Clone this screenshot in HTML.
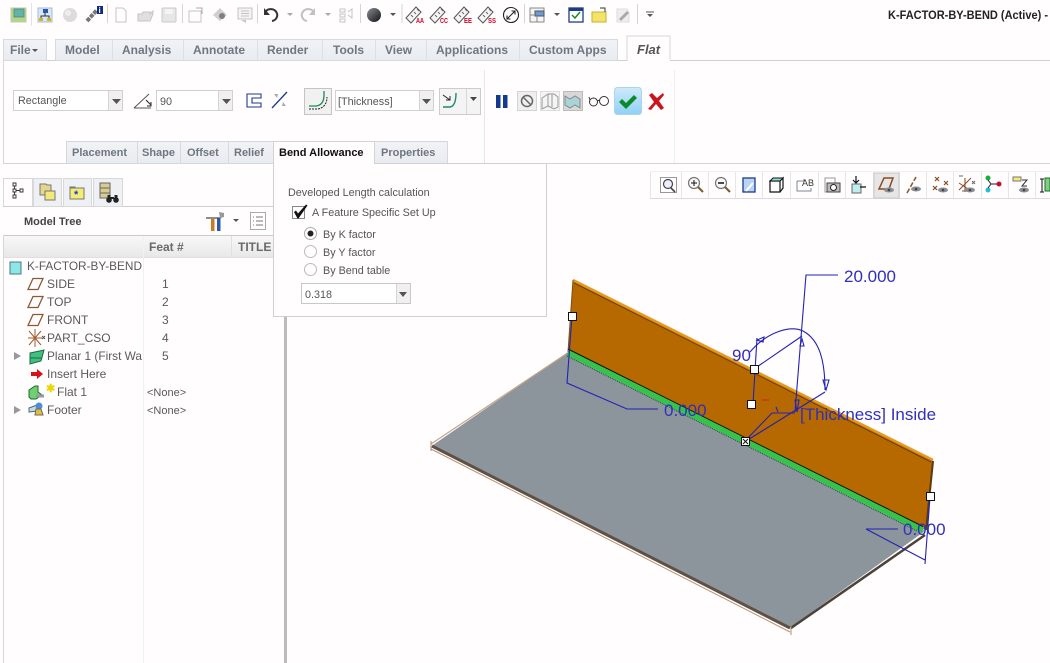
<!DOCTYPE html>
<html><head><meta charset="utf-8"><title>K-FACTOR-BY-BEND</title>
<style>
html,body{margin:0;padding:0;background:#fffdfe;width:1050px;height:663px;overflow:hidden}
svg{display:block;position:absolute;left:0;top:0}
text{font-family:"Liberation Sans",sans-serif;font-size:10.8px;fill:#4f4f4f}
.tab{font-weight:bold;font-size:12px;fill:#707680}
.sub{font-weight:bold;font-size:11px;fill:#707680}
.tree{font-size:12px;fill:#5a5a5a}
.dim{font-size:17px;fill:#3030bc}
.red{font-weight:bold;font-size:7px;fill:#d00020}
</style></head><body>
<svg width="1050" height="663" viewBox="0 0 1050 663" xmlns="http://www.w3.org/2000/svg">
<defs>
<linearGradient id="tb" x1="0" y1="0" x2="0" y2="1"><stop offset="0" stop-color="#f1f3f6"/><stop offset="1" stop-color="#e8ebf0"/></linearGradient>
<linearGradient id="hd" x1="0" y1="0" x2="0" y2="1"><stop offset="0" stop-color="#f8f8f8"/><stop offset="1" stop-color="#e8e8e8"/></linearGradient>
<linearGradient id="ok" x1="0" y1="0" x2="0" y2="1"><stop offset="0" stop-color="#cfeafb"/><stop offset="1" stop-color="#8fd0f6"/></linearGradient>
<linearGradient id="ball" x1="0" y1="0" x2="1" y2="1"><stop offset="0" stop-color="#8a8f96"/><stop offset="1" stop-color="#111"/></linearGradient>
<g id="ruler"><path d="M-8 4 L2 -7 L7 -2 L-3 9 Z" fill="#f6f6f6" stroke="#555" stroke-width="1"/><path d="M-3 1l2 2M0 -2l2 2M3 -5l2 2" stroke="#666" fill="none"/></g>
<g id="plane"><path d="M-7 5.500 H3 L8 -5.500 H-2 Z" fill="none" stroke="#8a5a30" stroke-width="1.300"/></g>
<g id="eye"><ellipse cx="0" cy="0" rx="5" ry="2.500" fill="#8b8f93"/><circle cx="0" cy="0" r="1.300" fill="#444"/></g>
<path id="drop" d="M-3 0H3L0 3Z" fill="#555"/>
<path id="drop2" d="M-3 0H3L0 3Z" fill="#aaa"/>
</defs>

<!-- top quick toolbar -->
<g>
<rect x="11" y="8" width="15" height="14" fill="#b4d488" stroke="#c0cca8"/><rect x="14" y="9" width="10" height="8" fill="#62b4a8" stroke="#4a8a80" stroke-width=".8"/>
<line x1="31.500" y1="3" x2="31.500" y2="26" stroke="#e2e2e2"/>
<rect x="38" y="8" width="14" height="14" fill="#d6e8f8" stroke="#a8bccc"/><rect x="43" y="9" width="5" height="4" fill="#2c55b0"/><path d="M45 13v3M41 19v-3h8v3" stroke="#333" fill="none"/><rect x="39" y="18" width="4" height="3" fill="#d8b030"/><rect x="47" y="18" width="4" height="3" fill="#d8b030"/>
<circle cx="70" cy="15" r="7" fill="#dcdcdc"/><circle cx="68" cy="13" r="3" fill="#eee"/>
<path d="M87 21 L97 10" stroke="#777" stroke-width="4" stroke-dasharray="4 1"/><rect x="97" y="6" width="6" height="8" fill="#102a80"/><text x="98.500" y="13" style="font-size:8px;font-weight:bold;fill:#fff">i</text>
<line x1="107.500" y1="4" x2="107.500" y2="23" stroke="#d4d4d4"/>
<path d="M116 8h7l3 3v11h-10z" fill="#fff" stroke="#c4c4c4"/>
<path d="M138 21v-7h4l1-2h7v2l3-3v3l-3 7z" fill="#e0e0e0" stroke="#c4c4c4"/>
<rect x="162" y="8" width="14" height="14" rx="1" fill="#e6e6e6" stroke="#cacaca"/><rect x="165" y="9" width="8" height="5" fill="#f4f4f4"/>
<line x1="182.500" y1="4" x2="182.500" y2="23" stroke="#d4d4d4"/>
<path d="M189 11h12v11h-12z" fill="none" stroke="#c4c4c4"/><path d="M196 8h6v6" fill="none" stroke="#aaa"/>
<path d="M213 15l7-7 7 7-7 6z" fill="#d0d0d0"/><circle cx="222" cy="16" r="3" fill="#808080"/>
<rect x="238" y="8" width="14" height="11" fill="#f4f4f4" stroke="#c4c4c4"/><path d="M241 11h8M241 13.500h8M241 16h8" stroke="#c4c4c4"/><path d="M241 20h5v3z" fill="#c4c4c4"/>
<line x1="257.500" y1="4" x2="257.500" y2="23" stroke="#d4d4d4"/>
<path d="M266 11 A6.500 6 0 1 1 272 21" fill="none" stroke="#333" stroke-width="2"/><path d="M264 8v7h6z" fill="#333"/>
<use href="#drop2" x="290" y="13"/>
<path d="M313 11 A6.500 6 0 1 0 307 21" fill="none" stroke="#c0c0c0" stroke-width="2"/><path d="M315 8v7h-6z" fill="#c0c0c0"/>
<use href="#drop2" x="328" y="13"/>
<path d="M340 9h5v3h-5zM340 14h5v3h-5zM340 19h5v3h-5zM348 12l4-3v9l-4-3" fill="none" stroke="#c4c4c4"/>
<line x1="360.500" y1="4" x2="360.500" y2="23" stroke="#d4d4d4"/>
<circle cx="374" cy="15" r="7" fill="url(#ball)"/>
<use href="#drop" x="393" y="13"/>
<line x1="402" y1="4" x2="402" y2="23" stroke="#d4d4d4"/>
<use href="#ruler" x="414" y="14"/><text x="416" y="23" class="red" textLength="8" lengthAdjust="spacingAndGlyphs">AA</text>
<use href="#ruler" x="438" y="14"/><text x="440" y="23" class="red" textLength="8" lengthAdjust="spacingAndGlyphs">CC</text>
<use href="#ruler" x="462" y="14"/><text x="464" y="23" class="red" textLength="8" lengthAdjust="spacingAndGlyphs">EE</text>
<use href="#ruler" x="486" y="14"/><text x="488" y="23" class="red" textLength="8" lengthAdjust="spacingAndGlyphs">SS</text>
<circle cx="511" cy="15" r="7.500" fill="#fff" stroke="#222" stroke-width="1.100"/><path d="M507 19L515 11M511.500 11H515V14.500M507 15.500V19H510.500" fill="none" stroke="#222" stroke-width="1.100"/>
<line x1="524.500" y1="4" x2="524.500" y2="23" stroke="#d4d4d4"/>
<rect x="530" y="8" width="14" height="14" fill="#f4f4f4" stroke="#888"/><rect x="535" y="11" width="9" height="5" fill="#6a9ad8" stroke="#555"/><path d="M530 15h5M537 16v6" stroke="#888"/>
<use href="#drop" x="557" y="13"/>
<rect x="569" y="8" width="14" height="14" fill="#fff" stroke="#1c3b8a" stroke-width="1.300"/><rect x="569" y="8" width="14" height="3" fill="#1c3b8a"/><path d="M572 15l3 3 5-6" fill="none" stroke="#1a8a30" stroke-width="1.500"/>
<path d="M592 12h14v10h-14z" fill="#f3e36a" stroke="#c8b030"/><path d="M600 8h5v4" fill="none" stroke="#333"/>
<path d="M617 9h10l2 3v10h-12z" fill="#eee" stroke="#ddd"/><path d="M620 20l8-8" stroke="#aaa" stroke-width="3"/>
<line x1="637.500" y1="4" x2="637.500" y2="24" stroke="#d4d4d4"/>
<path d="M646 12h8" stroke="#555"/><use href="#drop" x="650" y="14"/>
</g>
<text x="888" y="19" textLength="160" lengthAdjust="spacingAndGlyphs" style="font-size:12px;font-weight:bold;fill:#222">K-FACTOR-BY-BEND (Active) -</text>

<!-- ribbon tabs -->
<line x1="3" y1="60.500" x2="1050" y2="60.500" stroke="#cfcfcf"/>
<rect x="3.500" y="39.500" width="43" height="21" fill="url(#tb)" stroke="#d6d9de"/>
<rect x="55.500" y="39.500" width="562" height="21" fill="url(#tb)" stroke="#d6d9de"/>
<path d="M112.500 40v20M183.500 40v20M257.500 40v20M322.500 40v20M375.500 40v20M426.500 40v20M519.500 40v20" stroke="#dcdfe4"/>
<text x="10" y="54" class="tab">File</text><use href="#drop" x="35" y="49"/>
<text x="65" y="54" class="tab">Model</text>
<text x="122" y="54" class="tab">Analysis</text>
<text x="193" y="54" class="tab">Annotate</text>
<text x="267" y="54" class="tab">Render</text>
<text x="333" y="54" class="tab">Tools</text>
<text x="385" y="54" class="tab">View</text>
<text x="436" y="54" class="tab">Applications</text>
<text x="529" y="54" class="tab">Custom Apps</text>
<path d="M627 61V36H670V61" fill="#fffdfe" stroke="#d6d6d6"/><rect x="628" y="59" width="42" height="3" fill="#fffdfe"/>
<text x="637" y="54" style="font-size:13px;font-weight:bold;font-style:italic;fill:#555">Flat</text>

<!-- ribbon body -->
<path d="M3.500 61V163" stroke="#d6d6d6"/>
<line x1="3" y1="163.500" x2="1050" y2="163.500" stroke="#d4d4d4"/>
<line x1="484.500" y1="70" x2="484.500" y2="163" stroke="#e6e6e6"/>
<line x1="674.500" y1="70" x2="674.500" y2="163" stroke="#f0f0f0"/>

<rect x="13.500" y="90.500" width="109" height="20" fill="#fff" stroke="#d0d0d0"/><rect x="108" y="91" width="14" height="19" fill="#f0f0f0"/>
<path d="M108.500 91v19" stroke="#d4d4d4"/><path d="M112 99h9l-4.500 5z" fill="#555"/>
<text x="18" y="104" style="fill:#555">Rectangle</text>
<path d="M134 108L149 94M134 108H151" fill="none" stroke="#555"/><path d="M146 100l5 5M151 102v4h-4" fill="none" stroke="#222"/>
<rect x="156.500" y="90.500" width="76" height="20" fill="#fff" stroke="#d0d0d0"/><rect x="218" y="91" width="14" height="19" fill="#f0f0f0"/><path d="M218.500 91v19" stroke="#d4d4d4"/><path d="M222 99h9l-4.500 5z" fill="#555"/>
<text x="160" y="105" style="fill:#555">90</text>
<path d="M261 94H247V107H261V103H252V98H261Z" fill="none" stroke="#1e3a8a" stroke-width="1.100"/>
<path d="M272 108L287 92" stroke="#1e3a8a" stroke-width="1.300" fill="none"/><path d="M274 94h4l-1 4zM286 106h-4l1-4z" fill="#aaa"/>
<rect x="304.500" y="88.500" width="27" height="26" fill="#f0f1f0" stroke="#c4c4c4"/><path d="M309 106H316Q324 105 324 95V91" fill="none" stroke="#1a8a50" stroke-width="1.300"/><path d="M309 109H318Q327 107 327 97" fill="none" stroke="#222" stroke-dasharray="2 1"/>
<rect x="335.500" y="90.500" width="98" height="20" fill="#fff" stroke="#d0d0d0"/><rect x="419" y="91" width="14" height="19" fill="#f0f0f0"/><path d="M419.500 91v19" stroke="#d4d4d4"/><path d="M422 99h9l-4.500 5z" fill="#555"/>
<text x="338" y="105" style="fill:#555">[Thickness]</text>
<rect x="439.500" y="88.500" width="41" height="26" fill="#f4f4f4" stroke="#ccc"/><path d="M466.500 89v25" stroke="#d8d8d8"/>
<path d="M443 107H450Q456 106 456 93" fill="none" stroke="#1a8a70" stroke-width="1.400"/><path d="M443 95l7 5M450 96v4h-4" fill="none" stroke="#222"/><path d="M470 97h7l-3.500 4z" fill="#444"/>
<rect x="496" y="95" width="4.500" height="13" fill="#123a90"/><rect x="503" y="95" width="4.500" height="13" fill="#123a90"/>
<rect x="517.500" y="91.500" width="19" height="19" fill="#efefef" stroke="#d4d4d4"/><circle cx="527" cy="101" r="5.500" fill="none" stroke="#666" stroke-width="1.500"/><path d="M523 97l8 8" stroke="#666" stroke-width="1.500"/>
<rect x="540.500" y="91.500" width="19" height="19" fill="#f4f4f4" stroke="#ddd"/><path d="M542 98l6-4v12l-6 3zM548 94h6l4 3v10l-4 2-6-3M552 94v13" fill="none" stroke="#999"/>
<rect x="563.500" y="91.500" width="19" height="19" fill="#d8d8d8" stroke="#bbb"/><path d="M565 96l5 3 5-3 5 3v9l-5-3-5 3-5-3z" fill="#a8d4d8" stroke="#888"/>
<circle cx="593.500" cy="102" r="4" fill="none" stroke="#333"/><circle cx="604" cy="101" r="4.500" fill="none" stroke="#333"/><path d="M597 101l3-1M590 100l-1-3" stroke="#333" fill="none"/>
<rect x="614.500" y="87.500" width="27" height="27" rx="3" fill="url(#ok)" stroke="#a8d4f0"/>
<path d="M619 102l3-3 4 4 8-8 3 3-11 11z" fill="#0c8a2a"/>
<path d="M649 95l3-2 5 5 6-5 1 2-5 6 5 7-3 2-5-6-5 6-3-1 6-7z" fill="#c8161c"/>

<!-- sub tabs -->
<rect x="66.500" y="141.500" width="381" height="22" fill="url(#tb)" stroke="#d4d7db"/>
<path d="M137.500 142v21M180.500 142v21M228.500 142v21" stroke="#d6d9de"/>
<rect x="273.500" y="141.500" width="101" height="23" fill="#fffdfe" stroke="#d4d4d4"/>
<rect x="274" y="160" width="100" height="5" fill="#fffdfe"/>
<text x="72" y="156" class="sub">Placement</text>
<text x="142" y="156" class="sub">Shape</text>
<text x="187" y="156" class="sub">Offset</text>
<text x="234" y="156" class="sub">Relief</text>
<text x="279" y="156" class="sub" style="fill:#111">Bend Allowance</text>
<text x="381" y="156" class="sub">Properties</text>

<!-- gray sash -->
<rect x="284" y="316" width="3" height="347" fill="#bcbcbc"/>

<!-- left nav tabs -->
<line x1="3" y1="206.500" x2="274" y2="206.500" stroke="#cecece"/>
<path d="M3.500 206V178.500H32.500V206" fill="#fffdfe" stroke="#d8d8d8"/>
<rect x="33.500" y="178.500" width="28" height="28" fill="#eef0f4" stroke="#d8d8d8"/><rect x="63.500" y="178.500" width="28" height="28" fill="#eef0f4" stroke="#d8d8d8"/><rect x="93.500" y="178.500" width="29" height="28" fill="#eef0f4" stroke="#d8d8d8"/>
<path d="M13 183h3v3h-3zM13 189h3v3h-3zM13 195h3v3h-3zM20 189h3v3h-3zM14.500 186v3M14.500 192v3M16 190.500h4" fill="none" stroke="#333" stroke-width=".9"/>
<path d="M40 184h6l1 1h4v10h-11z" fill="#e4d68a" stroke="#777"/><path d="M45 191h10v9h-10z" fill="#f2ea78" stroke="#777"/>
<path d="M70 188h14v11h-14z" fill="#f4ec74" stroke="#777"/><path d="M70 188v-1h5v1" fill="none" stroke="#777"/><text x="74" y="198" style="font-size:11px;font-weight:bold;fill:#1a3fd0">*</text>
<rect x="100" y="183" width="10" height="15" fill="#d8cc90" stroke="#666"/><path d="M100 188h10M100 193h10" stroke="#666"/>
<circle cx="109" cy="200" r="2.800" fill="#222"/><circle cx="116" cy="200" r="2.800" fill="#222"/><path d="M107.500 195h3v4h-3zM114.500 195h3v4h-3z" fill="#222"/><path d="M110 198h4" stroke="#222" stroke-width="2"/>

<text x="24" y="225" style="font-weight:bold;font-size:11px;fill:#444">Model Tree</text>
<path d="M206 217h14l4-3v2l-4 3h-14z" fill="#8c8c8c"/><rect x="211" y="219" width="3.500" height="12" fill="#d07a20"/><rect x="217" y="218" width="3.500" height="13" fill="#2c5aa8"/><path d="M219 212l5 1v4l-4 1z" fill="#999"/>
<use href="#drop" x="236" y="219"/>
<rect x="250.500" y="212.500" width="15" height="17" fill="#fff" stroke="#aaa"/><path d="M253 217h1M256 217h7M253 221h1M256 221h7M253 225h1M256 225h7" stroke="#777"/>
<line x1="3" y1="235.500" x2="273" y2="235.500" stroke="#cacaca"/>
<rect x="4" y="236" width="269" height="21" fill="url(#hd)"/>
<line x1="4" y1="257.500" x2="273" y2="257.500" stroke="#e0e0e0"/>
<path d="M143.500 236V663" stroke="#f2f0f0"/><path d="M231.500 236V257" stroke="#e0e0e0"/>
<path d="M3.500 235V663" stroke="#d6d6d6"/>
<text x="149" y="251" style="font-size:12px;font-weight:bold;fill:#6a6a6a">Feat #</text>
<text x="238" y="251" style="font-size:12px;font-weight:bold;fill:#6a6a6a">TITLE</text>

<!-- tree rows -->
<path d="M10 262h11v12h-11z" fill="#8fe6e6" stroke="#4a7a88"/>
<text x="27" y="270" class="tree" textLength="115" lengthAdjust="spacingAndGlyphs">K-FACTOR-BY-BEND</text>
<use href="#plane" x="35" y="284"/><text x="47" y="288" class="tree">SIDE</text><text x="162" y="288" class="tree">1</text>
<use href="#plane" x="35" y="302"/><text x="47" y="306" class="tree">TOP</text><text x="162" y="306" class="tree">2</text>
<use href="#plane" x="35" y="320"/><text x="47" y="324" class="tree">FRONT</text><text x="162" y="324" class="tree">3</text>
<path d="M29 331l12 14M41 331l-12 14M35 329v18M28 338h14" stroke="#a05a30" fill="none"/><path d="M42 336l3 3M45 336l-3 3" stroke="#555"/>
<text x="47" y="342" class="tree">PART_CSO</text><text x="162" y="342" class="tree">4</text>
<path d="M14 352l7 4-7 4z" fill="#999"/>
<path d="M30 353l14-3-3 11-11 3z" fill="#40c080" stroke="#1c6a40"/><path d="M30 358h12" stroke="#1c6a40"/>
<text x="47" y="360" class="tree" textLength="95" lengthAdjust="spacingAndGlyphs">Planar 1 (First Wa</text><text x="162" y="360" class="tree">5</text>
<path d="M31 372h6v-3l6 5-6 5v-3h-6z" fill="#d8101a"/>
<text x="47" y="378" class="tree">Insert Here</text>
<path d="M29 397v-7l6-4h3v6l4 3-6 4h-5z" fill="#70d070" stroke="#1a6a30"/><path d="M36 396h8" stroke="#999" stroke-width="3"/>
<text x="46" y="392" style="font-size:11px;font-weight:bold;fill:#e8d800">✱</text>
<text x="57" y="396" class="tree">Flat 1</text><text x="147" y="396" class="tree" style="font-size:11px">&lt;None&gt;</text>
<path d="M14 406l7 4-7 4z" fill="#999"/>
<path d="M29 408l8-3 3 3-3 3-8 1z" fill="#bde0e8" stroke="#567"/><circle cx="39" cy="406" r="3.500" fill="#4a90d8"/><path d="M36 409l5 0 2 6h-8z" fill="#e0c040" stroke="#765"/>
<text x="47" y="414" class="tree">Footer</text><text x="147" y="414" class="tree" style="font-size:11px">&lt;None&gt;</text>

<!-- 3D part -->
<path d="M573 280L933 461L925 530L568 350Z" fill="#b66900"/>
<path d="M573 280L933 460" stroke="#e59a24" stroke-width="2.500"/>
<path d="M574 283L931 462" stroke="#5a3800" stroke-width=".7"/>
<path d="M933 461L926 530" stroke="#5a3a10" stroke-width="2"/>
<path d="M573 280L568 352" stroke="#7a5010"/>
<path d="M568 352L925 531L791 627L433 445Z" fill="#8c959c"/>
<path d="M568 352.500L923 530" stroke="#34c44c" stroke-width="5.500"/>
<path d="M568 349L923 526.500" stroke="#111" stroke-width="1"/>
<path d="M567 356L917 531" stroke="#0a5a20" stroke-width="1" stroke-dasharray="1 1"/>
<path d="M432 446L790 628" stroke="#5e5044" stroke-width="3"/>
<path d="M431 449L790 632" stroke="#b99272" stroke-width="1"/>
<path d="M791 628L925 535" stroke="#4d4238" stroke-width="2.500"/>
<path d="M431 444L566 354" stroke="#c8a488" stroke-width="1.200"/>
<path d="M431 441V451M791 626V635" stroke="#b08a6a"/>

<!-- dimensions -->
<g fill="none" stroke="#2222b4" stroke-width="1.100">
<path d="M572 316L567 383L627 409H658"/>
<path d="M838 275H806L795 412"/>
<path d="M757 338L753 404"/>
<path d="M754 369L802 336"/>
<path d="M750 352C767 332 790 325 803 331C820 340 825 362 825 390"/>
<path d="M825 392L746 441M745 441L772 413L795 413"/>
<path d="M866 529H898M866 529L925 560M925 564L930 497"/>
<path d="M800 346l2-7 2 7zM795 400l2 12 2-12zM823 380l3 10 3-10zM764 337l-7 3 6 2z"/>
<path d="M776 407l2 5"/>
</g>
<path d="M762 400h7" stroke="#d02020"/>
<rect x="568.500" y="312.500" width="8" height="8" fill="#fff" stroke="#111"/>
<rect x="750.500" y="365.500" width="8" height="8" fill="#fff" stroke="#111"/>
<rect x="747.500" y="400.500" width="8" height="8" fill="#fff" stroke="#111"/>
<rect x="926.500" y="492.500" width="8" height="8" fill="#fff" stroke="#111"/>
<rect x="741.500" y="437.500" width="8" height="8" fill="#fff" stroke="#111"/><path d="M743 439l5 5M748 439l-5 5" stroke="#111"/>
<text x="844" y="282" class="dim">20.000</text>
<text x="732" y="361" class="dim">90</text>
<text x="664" y="416" class="dim">0.000</text>
<text x="800" y="420" class="dim">[Thickness] Inside</text>
<text x="903" y="535" class="dim">0.000</text>

<!-- bend allowance panel -->
<rect x="273.500" y="163.500" width="273" height="153" fill="#fffdfe" stroke="#d0d0d0"/>
<rect x="274" y="162" width="100" height="3" fill="#fffdfe"/>
<text x="288" y="196" style="fill:#555">Developed Length calculation</text>
<rect x="292.500" y="206.500" width="12" height="12" fill="#fff" stroke="#888"/>
<path d="M294 212l2-1.500 2 3 8-9 1.500 1-9 13h-1z" fill="#111"/>
<text x="312" y="216" style="fill:#555">A Feature Specific Set Up</text>
<circle cx="310.500" cy="233.500" r="6" fill="#fff" stroke="#aaa"/><circle cx="310.500" cy="233.500" r="3" fill="#222"/>
<text x="323" y="238" style="fill:#555">By K factor</text>
<circle cx="310.500" cy="251.500" r="6" fill="#fff" stroke="#bbb"/>
<text x="323" y="256" style="fill:#555">By Y factor</text>
<circle cx="310.500" cy="269.500" r="6" fill="#fff" stroke="#bbb"/>
<text x="323" y="274" style="fill:#555">By Bend table</text>
<rect x="301.500" y="283.500" width="109" height="20" fill="#fff" stroke="#c8c8c8"/><rect x="396" y="284" width="14" height="19" fill="#f0f0f0"/><path d="M396.500 284v19" stroke="#d4d4d4"/><path d="M399 292h8l-4 5z" fill="#555"/>
<text x="305" y="298" style="fill:#555">0.318</text>

<!-- graphics toolbar -->
<line x1="650" y1="198.500" x2="1050" y2="198.500" stroke="#dcdcdc"/>
<line x1="650" y1="171.500" x2="1050" y2="171.500" stroke="#f0f0f0"/>
<path d="M650.500 172v26M681.500 172v26M708.500 172v26M735.500 172v26M762.500 172v26M790.500 172v26M818.500 172v26M845.500 172v26M873.500 172v26M899.500 172v26M926.500 172v26M953.500 172v26M981.500 172v26M1008.500 172v26M1035.500 172v26" stroke="#e6e6e6"/>
<rect x="874" y="173" width="25" height="25" fill="#e6e6e6" stroke="#c8c8c8"/>
<rect x="660.500" y="177.500" width="16" height="15" fill="#fff" stroke="#999"/><circle cx="668" cy="184" r="4.500" fill="#eef" stroke="#444" stroke-width="1.200"/><path d="M671 188l4 4" stroke="#444" stroke-width="1.600"/>
<circle cx="694" cy="183" r="5.500" fill="#f8f8f8" stroke="#777" stroke-width="1.200"/><path d="M691 183h6M694 180v6" stroke="#111"/><path d="M698 187l5 5" stroke="#7a5a30" stroke-width="2"/>
<circle cx="721" cy="183" r="5.500" fill="#f8f8f8" stroke="#777" stroke-width="1.200"/><path d="M718 183h6" stroke="#111" stroke-width="1.500"/><path d="M725 187l5 5" stroke="#7a5a30" stroke-width="2"/>
<rect x="743" y="178" width="12" height="14" fill="#b8d4f0" stroke="#1c3b8a" stroke-width="1.300"/><path d="M746 191l7-8" stroke="#fff" stroke-width="2"/>
<path d="M770 181h10v11h-10zM780 181l3-3v10l-3 4" fill="#fff" stroke="#111" stroke-width="1.200"/><path d="M773 178h10l-3 3h-10z" fill="#8fe0d8" stroke="#111"/>
<path d="M797 181h7v-2M797 181v10h14v-3" fill="none" stroke="#789"/><text x="802" y="186" style="font-size:9px;fill:#333">AB</text>
<rect x="825" y="178" width="10" height="14" fill="#fff" stroke="#999"/><rect x="827" y="183" width="13" height="9" fill="#bbb" stroke="#444"/><circle cx="833.500" cy="187.500" r="3" fill="#fff" stroke="#222"/>
<path d="M852 184h9v9h-9z" fill="#bfeef0" stroke="#666"/><path d="M856 176v7M853 180l3 3 3-3M866 187h-6" fill="none" stroke="#111" stroke-width="1.200"/>
<path d="M879 189H889L893 178H884Z" fill="none" stroke="#8a4a20" stroke-width="1.500"/><use href="#eye" x="889" y="190"/>
<path d="M907 193L916 177" stroke="#8a5a30" stroke-width="1.600" stroke-dasharray="5 2"/><use href="#eye" x="916" y="189"/>
<path d="M935 177l4 4M939 177l-4 4M944 181l4 4M948 181l-4 4M933 186l4 4M937 186l-4 4" stroke="#8a4a20" stroke-width="1.200"/><use href="#eye" x="943" y="190"/>
<path d="M959 183l12 8M971 178l-12 12M965 178v14" stroke="#8a4a20"/><path d="M972 181l3 3M975 181l-3 3M959 176h4M962 191h3" stroke="#666"/><use href="#eye" x="970" y="190"/>
<circle cx="988" cy="178" r="2.500" fill="#18b040"/><circle cx="999" cy="184" r="2.500" fill="#c01030"/><circle cx="988" cy="190" r="2.500" fill="#20c0d8"/><path d="M988 180l3 4-3 4M991 184h6" fill="none" stroke="#222"/>
<rect x="1013" y="177" width="8" height="4" fill="#f4ec74" stroke="#777"/><path d="M1022 180h5l-5 6h5" fill="none" stroke="#333"/><use href="#eye" x="1024" y="190"/>
<path d="M1042 179v13M1040 179h4M1040 192h4" stroke="#111"/><rect x="1045" y="178" width="5" height="13" fill="#80d080" stroke="#1a6a30"/>
</svg>
</body></html>
